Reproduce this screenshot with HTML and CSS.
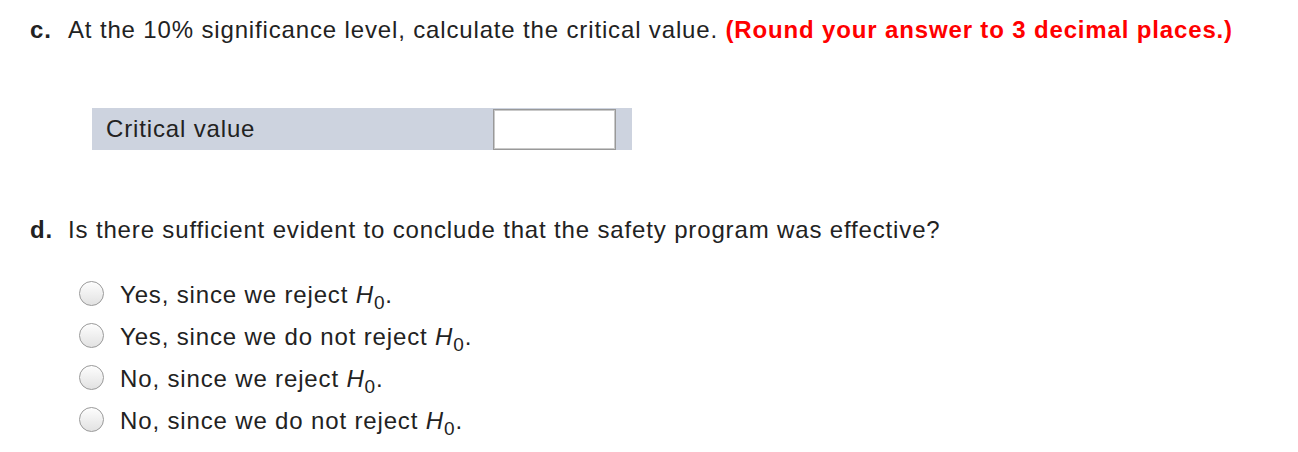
FILE: index.html
```html
<!DOCTYPE html>
<html>
<head>
<meta charset="utf-8">
<link rel="stylesheet" href="styles.css">
</head>
<body>
<div class="page">
  <section class="part">
    <p class="q-head"><span class="q-label">c.</span><span class="q-text">At the 10% significance level, calculate the critical value. <strong class="hint">(Round your answer to 3 decimal places.)</strong></span></p>
    <div class="answer-table">
      <div class="answer-label">Critical value</div>
      <div class="answer-cell"><input class="answer-input" type="text"></div>
    </div>
  </section>
  <section class="part part-d">
    <p class="q-head"><span class="q-label">d.</span><span class="q-text">Is there sufficient evident to conclude that the safety program was effective?</span></p>
    <ul class="options">
      <li class="option"><span class="radio"></span><span>Yes, since we reject <i class="var">H</i><sub class="sub">0</sub>.</span></li>
      <li class="option"><span class="radio"></span><span>Yes, since we do not reject <i class="var">H</i><sub class="sub">0</sub>.</span></li>
      <li class="option"><span class="radio"></span><span>No, since we reject <i class="var">H</i><sub class="sub">0</sub>.</span></li>
      <li class="option"><span class="radio"></span><span>No, since we do not reject <i class="var">H</i><sub class="sub">0</sub>.</span></li>
    </ul>
  </section>
</div>
</body>
</html>
```
FILE: styles.css
```css
html, body {
  margin: 0;
  padding: 0;
  background: #fff;
}
body {
  font-family: "Liberation Sans", Arial, Helvetica, sans-serif;
  font-size: 24px;
  letter-spacing: 0.85px;
  color: #222;
}
.page {
  padding: 15px 0 0 30px;
}
.q-head {
  margin: 0;
  display: flex;
  line-height: 29px;
  white-space: nowrap;
}
.q-label {
  width: 38px;
  flex: none;
  font-weight: bold;
}
.hint {
  color: #f00;
  font-weight: bold;
}
.answer-table {
  margin: 64px 0 0 62px;
  width: 540px;
  height: 42px;
  background: #cdd3df;
  display: flex;
  align-items: center;
}
.answer-label {
  padding-left: 14px;
  width: 387px;
}
.answer-cell {
  display: flex;
  align-items: center;
}
.answer-input {
  box-sizing: border-box;
  width: 123px;
  height: 41px;
  margin: 0;
  border: 1px solid #999;
  box-shadow: inset 0 0 0 1px #c9c9c9;
  background: #fff;
  outline: none;
}
.part-d {
  margin-top: 65px;
}
.options {
  list-style: none;
  margin: 30px 0 0 49px;
  padding: 0;
}
.option {
  display: flex;
  align-items: center;
  height: 42px;
  line-height: 42px;
}
.radio {
  box-sizing: border-box;
  width: 25px;
  height: 25px;
  border-radius: 50%;
  border: 1px solid #999;
  background: linear-gradient(#fdfdfd, #e2e2e2);
  box-shadow: inset 0 1px 1px rgba(255,255,255,0.9);
  margin: 0 16px 4px 0;
  flex: none;
}
.var {
  font-style: italic;
}
.sub {
  font-size: 19px;
  vertical-align: -6px;
  line-height: 0;
}
```
